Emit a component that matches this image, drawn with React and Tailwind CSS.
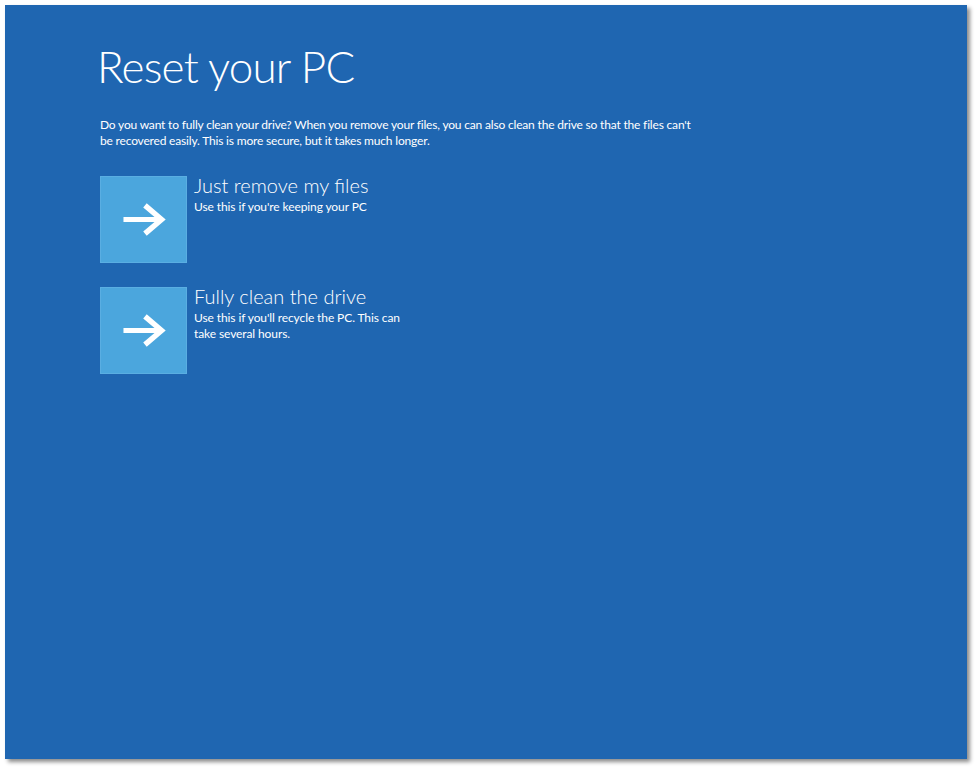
import React from "react";

function Arrow() {
  return (
    <svg width="87" height="87" viewBox="0 0 87 87">
      <path d="M23 43.5 H62" stroke="#ffffff" strokeWidth="5" fill="none" />
      <path d="M45 29 L62 43.5 L45 58" stroke="#ffffff" strokeWidth="5.5" fill="none" strokeLinejoin="miter" />
    </svg>
  );
}

function Option({ title, desc }) {
  return (
    <div className="flex items-start">
      <div className="w-[87px] h-[87px] bg-[#4ba6dd] border border-[#5aaee2] flex items-center justify-center shrink-0">
        <Arrow />
      </div>
      <div className="pl-[7px] -mt-[4px] w-[222px]">
        <div className="text-[20px] leading-[26px] font-light text-white">{title}</div>
        <div className="text-[12px] leading-[16px] tracking-[-0.1px] text-white mt-[1px] w-[212px]">{desc}</div>
      </div>
    </div>
  );
}

export default function App() {
  return (
    <div
      className="w-[976px] h-[768px] bg-white pt-[5px] pl-[5px]"
      style={{ fontFamily: 'Lato, "Open Sans", sans-serif' }}
    >
      <div className="w-[962px] h-[754px] bg-[#1f66b1] shadow-[3px_3px_4px_rgba(0,0,0,0.45)] pl-[95px] pt-[31px]">
        <h1 className="-ml-[3px] text-[44px] leading-[60px] font-light text-white tracking-[-0.8px]">Reset your PC</h1>
        <p className="mt-[21px] text-[12px] leading-[16px] tracking-[-0.18px] text-white">
          Do you want to fully clean your drive? When you remove your files, you can also clean the drive so that the files can't
          <br />
          be recovered easily. This is more secure, but it takes much longer.
        </p>
        <div className="mt-[27px] flex flex-col gap-[24px]">
          <Option title="Just remove my files" desc="Use this if you're keeping your PC" />
          <Option title="Fully clean the drive" desc="Use this if you'll recycle the PC. This can take several hours." />
        </div>
      </div>
    </div>
  );
}
